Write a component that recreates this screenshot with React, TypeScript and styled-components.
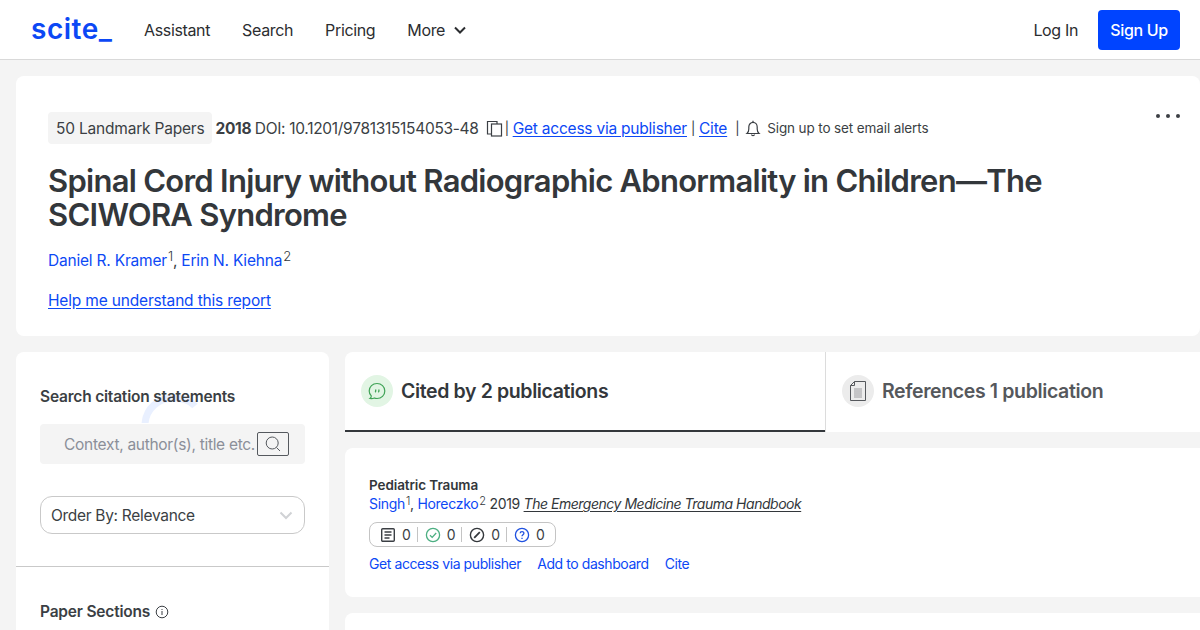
import * as React from "react";
import styled, { createGlobalStyle } from "styled-components";

const GlobalStyle = createGlobalStyle`
  html, body {
    margin: 0;
    padding: 0;
    background: #f4f4f4;
    font-family: Inter, "Liberation Sans", sans-serif;
    color: #33373b;
    overflow: hidden;
  }
  * { box-sizing: border-box; }
`;

const Page = styled.div`
  width: 1200px;
  height: 630px;
  overflow: hidden;
`;

const TopBar = styled.header`
  height: 60px;
  background: #fff;
  border-bottom: 1px solid #d9d9d9;
  display: flex;
  align-items: center;
  padding: 0 20px 0 32px;
`;

const Logo = styled.div`
  width: 80px;
  margin: -2px 33px 0 -1px;
  color: #0c48f5;
  font-size: 28px;
  font-weight: 600;
  letter-spacing: 0.5px;
  line-height: 1;
  flex: none;
`;

const NavLink = styled.span`
  font-size: 16px;
  letter-spacing: -0.35px;
  color: #2b2d30;
  margin-right: 32px;
  display: flex;
  align-items: center;
  gap: 8px;
`;

const Spacer = styled.div`
  flex: 1;
`;

const SignUp = styled.div`
  width: 82px;
  height: 40px;
  border-radius: 4px;
  background: #0044ff;
  color: #fff;
  font-size: 16px;
  font-weight: 500;
  letter-spacing: -0.35px;
  display: flex;
  align-items: center;
  justify-content: center;
  margin-left: -12px;
`;

const Body = styled.main`
  padding: 16px 0 0 16px;
  display: flex;
  flex-direction: column;
  gap: 16px;
`;

const HeadCard = styled.section`
  position: relative;
  height: 260px;
  background: #fff;
  border-radius: 8px;
  padding: 36px 32px 0;
`;

const MoreDots = styled.div`
  position: absolute;
  top: 38px;
  right: 20px;
  display: flex;
  gap: 6px;

  i {
    width: 4px;
    height: 4px;
    border-radius: 50%;
    background: #3b3f44;
  }
`;

const MetaRow = styled.div`
  display: flex;
  align-items: center;
  height: 32px;
  font-size: 15.5px;
  letter-spacing: -0.3px;
  color: #3b3f44;
  white-space: nowrap;

  a {
    letter-spacing: -0.22px;
  }
`;

const Tag = styled.span`
  height: 32px;
  padding: 0 8px;
  background: #f4f4f4;
  border-radius: 4px;
  display: flex;
  align-items: center;
  margin-right: 3px;
  letter-spacing: -0.2px;
`;

const Year = styled.b`
  font-weight: 700;
  letter-spacing: -0.3px;
  margin-right: 3.5px;
`;

const Blue = styled.a<{ $under?: boolean }>`
  color: #0c48f5;
  text-decoration: ${(p) => (p.$under ? "underline" : "none")};
  text-underline-offset: 2px;
`;

const Sep = styled.span<{ $l?: number; $r?: number }>`
  font-size: 13px;
  color: #33373b;
  margin-left: ${(p) => p.$l ?? 0}px;
  margin-right: ${(p) => p.$r ?? 0}px;
`;

const IconSlot = styled.span<{ $l?: number; $r?: number }>`
  display: inline-flex;
  margin-left: ${(p) => p.$l ?? 0}px;
  margin-right: ${(p) => p.$r ?? 0}px;
`;

const AlertText = styled.span`
  font-size: 13.5px;
  letter-spacing: -0.12px;
`;

const Title = styled.h1`
  margin: 20px 0 0;
  width: 1020px;
  font-size: 31px;
  line-height: 34px;
  font-weight: 600;
  letter-spacing: -0.73px;
  color: #33373b;
`;

const Authors = styled.div`
  margin-top: 17px;
  font-size: 15.5px;
  letter-spacing: -0.2px;
  line-height: 24px;
  color: #33373b;

  sup {
    font-size: 13px;
    font-weight: 300;
    line-height: 0;
    margin-left: 1px;
    vertical-align: 5px;
  }
`;

const HelpLine = styled.div`
  margin-top: 16px;
  font-size: 15.5px;
  letter-spacing: -0.17px;
  line-height: 24px;
`;

const Columns = styled.div`
  display: flex;
  gap: 16px;
`;

const Sidebar = styled.aside`
  position: relative;
  width: 313px;
  height: 300px;
  flex: none;
  background: #fff;
  border-radius: 8px 8px 0 0;
`;

const Spinner = styled.svg`
  position: absolute;
  left: 125px;
  top: 39px;
`;

const SideBlock = styled.div<{ $h: number; $pt: number }>`
  position: relative;
  height: ${(p) => p.$h}px;
  padding: ${(p) => p.$pt}px 24px 0;
`;

const SideTitle = styled.div`
  display: flex;
  align-items: center;
  gap: 5px;
  font-size: 15.5px;
  font-weight: 600;
  letter-spacing: -0.2px;
  line-height: 20px;
  color: #3b3f44;
`;

const SearchBox = styled.div`
  margin-top: 17px;
  height: 40px;
  background: #f4f4f4;
  border-radius: 4px;
  display: flex;
  align-items: center;
  justify-content: flex-end;
  padding-right: 16px;
  gap: 2px;
  font-size: 15.5px;
  letter-spacing: -0.3px;
  color: #8b8f99;
`;

const SearchButton = styled.span`
  width: 32px;
  height: 24px;
  border: 1px solid #55595e;
  border-radius: 2px;
  display: flex;
  align-items: center;
  justify-content: center;
`;

const OrderSelect = styled.div`
  margin-top: 32px;
  height: 38px;
  border: 1px solid #c9c9c9;
  border-radius: 12px;
  display: flex;
  align-items: center;
  justify-content: space-between;
  padding: 0 11px 0 10px;
  font-size: 15.5px;
  letter-spacing: -0.3px;
  color: #3b3f44;
`;

const Divider = styled.div`
  height: 1px;
  background: #c9c9c9;
`;

const Results = styled.div`
  flex: 1;
  display: flex;
  flex-direction: column;
  gap: 16px;
`;

const Tabs = styled.nav`
  display: flex;
  height: 80px;
`;

const Tab = styled.div<{ $active?: boolean }>`
  height: 80px;
  background: #fff;
  display: flex;
  align-items: center;
  gap: 8px;
  font-size: 19.5px;
  font-weight: 600;
  letter-spacing: -0.37px;
  ${(p) =>
    p.$active
      ? `width: 480px; padding-left: 16px; color: #33373b; border-bottom: 2px solid #33373b; border-radius: 8px 0 0 0;`
      : `flex: 1; padding: 0 0 2px 16px; color: #55585c; border-left: 1px solid #dcdcdc;`}
`;

const TabIcon = styled.span<{ $bg: string }>`
  width: 32px;
  height: 32px;
  border-radius: 50%;
  background: ${(p) => p.$bg};
  display: flex;
  align-items: center;
  justify-content: center;
`;

const ResultCard = styled.article<{ $h: number }>`
  height: ${(p) => p.$h}px;
  background: #fff;
  border-radius: 8px 0 0 8px;
  padding: 28px 24px 0;
`;

const PubTitle = styled.div`
  font-size: 13.5px;
  font-weight: 600;
  line-height: 18px;
  letter-spacing: -0.1px;
  color: #33373b;
`;

const PubMeta = styled.div`
  font-size: 14px;
  line-height: 20px;
  letter-spacing: -0.3px;
  color: #33373b;

  sup {
    font-size: 11px;
    font-weight: 300;
    line-height: 0;
    vertical-align: 4px;
    margin-left: 1px;
  }

  em {
    letter-spacing: -0.48px;
    text-decoration: underline;
    text-underline-offset: 1.5px;
  }
`;

const Tally = styled.div`
  margin-top: 8px;
  width: 187px;
  height: 25px;
  border: 1px solid #c4c4c4;
  border-radius: 8px;
  display: flex;
  align-items: center;
  padding-left: 3px;
`;

const TallyItem = styled.span`
  display: flex;
  align-items: center;
  gap: 6px;
  font-size: 14px;
  letter-spacing: -0.2px;
  color: #3b3f44;
  height: 15px;
  padding: 0 6px 0 7px;

  & + & {
    border-left: 1px solid #c4c4c4;
  }
`;

const Actions = styled.div`
  margin-top: 7px;
  display: flex;
  gap: 16px;
  font-size: 14px;
  line-height: 20px;
  letter-spacing: -0.42px;
`;

const tallyIcons = [
  <svg width="16" height="16" viewBox="0 0 16 16" fill="none" stroke="#3b3f44" strokeWidth="1.4">
    <rect x="1.7" y="1.7" width="12.6" height="12.6" rx="1" />
    <path d="M4.5 5h7M4.5 8h7M4.5 11h5" />
  </svg>,
  <svg width="16" height="16" viewBox="0 0 16 16" fill="none" stroke="#4caf82" strokeWidth="1.3">
    <circle cx="8" cy="8" r="6.6" />
    <path d="M5 8.2l2.2 2.2L11.2 6" />
  </svg>,
  <svg width="16" height="16" viewBox="0 0 16 16" fill="none" stroke="#33373b" strokeWidth="1.4">
    <circle cx="8" cy="8" r="6.6" />
    <path d="M5.2 10.8L10.8 5.2" strokeWidth="1.8" />
  </svg>,
  <svg width="16" height="16" viewBox="0 0 16 16" fill="none" stroke="#1f51e0" strokeWidth="1.3">
    <circle cx="8" cy="8" r="6.6" />
    <path d="M6.2 6.3c0-2.3 3.7-2.3 3.7-.1 0 1.5-1.9 1.5-1.9 3.1" />
    <path d="M8 10.8v1.1" />
  </svg>,
];

const App: React.FC = () => (
  <Page>
    <GlobalStyle />
    <TopBar>
      <Logo>scite_</Logo>
      <NavLink>Assistant</NavLink>
      <NavLink>Search</NavLink>
      <NavLink>Pricing</NavLink>
      <NavLink>
        More
        <svg width="14" height="14" viewBox="0 0 14 14" fill="none" stroke="#2b2d30" strokeWidth="2">
          <path d="M2 4.5l5 5 5-5" />
        </svg>
      </NavLink>
      <Spacer />
      <NavLink>Log In</NavLink>
      <SignUp>Sign Up</SignUp>
    </TopBar>
    <Body>
      <HeadCard>
        <MoreDots>
          <i />
          <i />
          <i />
        </MoreDots>
        <MetaRow>
          <Tag>50 Landmark Papers</Tag>
          <Year>2018</Year>
          DOI: 10.1201/9781315154053-48
          <IconSlot $l={7}>
            <svg width="17" height="17" viewBox="0 0 17 17" fill="none" stroke="#3b3f44" strokeWidth="1.2">
              <path d="M5 14H1.500V1.500H11V4" />
              <rect x="5.500" y="4" width="10" height="12" />
            </svg>
          </IconSlot>
          <Sep $l={2} $r={4}>|</Sep>
          <Blue $under>Get access via publisher</Blue>
          <Sep $l={4} $r={4}>|</Sep>
          <Blue $under>Cite</Blue>
          <Sep $l={8} $r={6}>|</Sep>
          <IconSlot $r={6}>
            <svg width="16" height="17" viewBox="0 0 16 17" fill="none" stroke="#3b3f44" strokeWidth="1.2">
              <path d="M2 13.500h12c-1.400-1.200-1.800-2.400-1.800-4.500V7c0-2.500-1.800-4.600-4.200-4.600S3.800 4.500 3.800 7v2c0 2.100-.4 3.300-1.800 4.500z" />
              <path d="M8 .8v1.600M6.500 14.500c.2 1.600 2.800 1.600 3 0" />
            </svg>
          </IconSlot>
          <AlertText>Sign up to set email alerts</AlertText>
        </MetaRow>
        <Title>Spinal Cord Injury without Radiographic Abnormality in Children—The SCIWORA Syndrome</Title>
        <Authors>
          <Blue>Daniel R. Kramer</Blue>
          <sup>1</sup>, <Blue>Erin N. Kiehna</Blue>
          <sup>2</sup>
        </Authors>
        <HelpLine>
          <Blue $under>Help me understand this report</Blue>
        </HelpLine>
      </HeadCard>
      <Columns>
        <Sidebar>
          <Spinner width="70" height="32" viewBox="0 0 70 32" fill="none">
            <path d="M4 33C5 17 18 7 32 7c9 0 17 2 22 8" stroke="#e9f0ff" strokeWidth="7" />
          </Spinner>
          <SideBlock $h={214} $pt={35}>
            <SideTitle>Search citation statements</SideTitle>
            <SearchBox>
              Context, author(s), title etc.
              <SearchButton>
                <svg width="18" height="18" viewBox="0 0 18 18" fill="none" stroke="#55595e" strokeWidth="1">
                  <circle cx="8.200" cy="8" r="6" />
                  <path d="M12.500 12.500l3.500 3.500" />
                </svg>
              </SearchButton>
            </SearchBox>
            <OrderSelect>
              Order By: Relevance
              <svg width="14" height="14" viewBox="0 0 14 14" fill="none" stroke="#d0d2d5" strokeWidth="2">
                <path d="M1.500 4.500l5.500 5.500 5.500-5.500" />
              </svg>
            </OrderSelect>
          </SideBlock>
          <Divider />
          <SideBlock $h={80} $pt={35}>
            <SideTitle>
              Paper Sections
              <svg width="14" height="14" viewBox="0 0 14 14" fill="none" stroke="#3b3f44" strokeWidth="1">
                <circle cx="7" cy="7" r="5.800" />
                <path d="M7 6v4M7 4v1" />
              </svg>
            </SideTitle>
          </SideBlock>
        </Sidebar>
        <Results>
          <Tabs>
            <Tab $active>
              <TabIcon $bg="#e2f5e4">
                <svg width="20" height="20" viewBox="0 0 20 20" fill="none" stroke="#3fa356" strokeWidth="1.200">
                  <path d="M3 17.500c1-.8 1.400-1.500 1.300-2.600C2.900 13.600 2.200 12 2.200 10c0-4.300 3.400-7.500 7.800-7.500s7.800 3.200 7.800 7.500-3.400 7.500-7.800 7.500c-1 0-1.900-.2-2.700-.5-1.300.6-2.700.7-4.300.5z" />
                  <path d="M8.700 8.500v1.500c0 .6-.3.9-.7 1.100M11.900 8.500v1.500c0 .6-.3.9-.7 1.100" strokeWidth="1.300" />
                </svg>
              </TabIcon>
              Cited by 2 publications
            </Tab>
            <Tab>
              <TabIcon $bg="#ececec">
                <svg width="20" height="22" viewBox="0 0 20 22" fill="none" stroke="#55585c" strokeWidth="1">
                  <path d="M6.500 1.500h11v19h-15V5.500z" />
                  <path d="M6.500 1.500v4h-4" />
                  <path d="M6 9h8M6 11h8M6 13h8M6 15h8M6 17h8" stroke="#8a8c8f" strokeWidth=".8" />
                </svg>
              </TabIcon>
              References 1 publication
            </Tab>
          </Tabs>
          <ResultCard $h={149}>
            <PubTitle>Pediatric Trauma</PubTitle>
            <PubMeta>
              <Blue>Singh</Blue>
              <sup>1</sup>, <Blue>Horeczko</Blue>
              <sup>2</sup> 2019 <em>The Emergency Medicine Trauma Handbook</em>
            </PubMeta>
            <Tally>
              {tallyIcons.map((icon, i) => (
                <TallyItem key={i}>
                  {icon}0
                </TallyItem>
              ))}
            </Tally>
            <Actions>
              <Blue>Get access via publisher</Blue>
              <Blue>Add to dashboard</Blue>
              <Blue>Cite</Blue>
            </Actions>
          </ResultCard>
          <ResultCard $h={60} />
        </Results>
      </Columns>
    </Body>
  </Page>
);

export default App;
